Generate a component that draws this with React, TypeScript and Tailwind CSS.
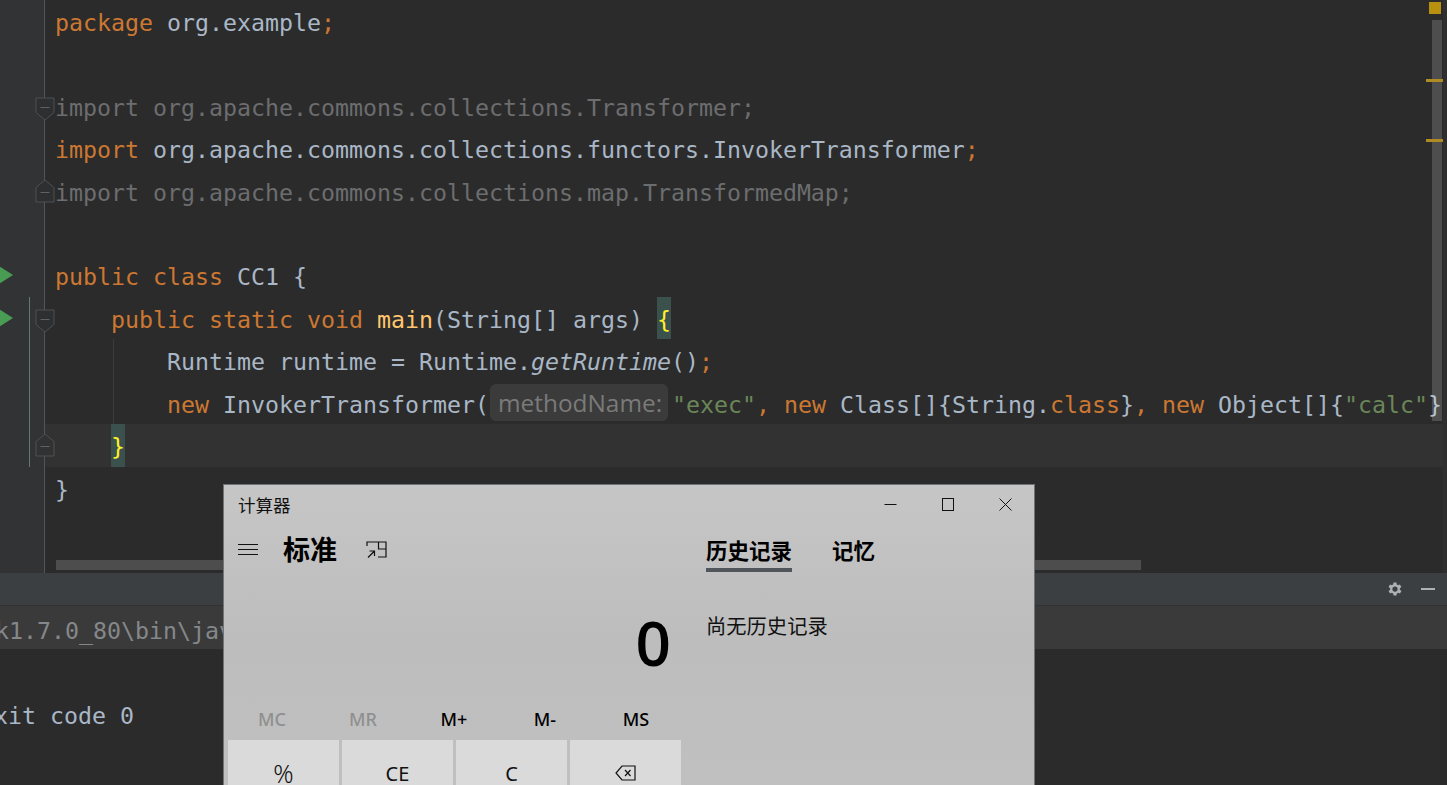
import React from "react";

type Seg = [string, string?];
const K = "text-[#cc7832]";
const I = "text-[#a9b7c6]";
const G = "text-[#6c6d6f]";
const S = "text-[#6a8759]";
const Y = "text-[#ffef28] bg-[#3b514d]";

function Run() {
  return (
    <svg className="absolute left-0 top-[10px]" width="14" height="22" viewBox="0 0 14 22">
      <path d="M-1 2 L13 11 L-1 20 Z" fill="#499c54" />
    </svg>
  );
}

function Fold({ up, filled, top }: { up?: boolean; filled?: boolean; top: string }) {
  return (
    <svg className={`absolute left-[35px] ${top}`} width="20" height="24" viewBox="0 0 20 24" fill="none">
      <path
        d={up ? "M1 8.5 L10 1 L19 8.5 V23 H1 Z" : "M1 1 H19 V15.5 L10 23 L1 15.5 Z"}
        fill={filled ? "#323232" : "#2e2f30"}
        stroke="#4e5052"
      />
      <path d={up ? "M5.5 13.5 H14.5" : "M5.5 10.5 H14.5"} stroke="#5f6163" />
    </svg>
  );
}

function Line({ segs }: { segs: Seg[] }) {
  return (
    <div className="h-[42.4px] pl-[10px] whitespace-pre">
      {segs.map((s, i) => (
        <span key={i} className={s[1] ?? I}>
          {s[0]}
        </span>
      ))}
    </div>
  );
}

function CalcKey({ children }: { children: React.ReactNode }) {
  return (
    <div className="h-[60px] flex-1 bg-[#dadada] flex items-start justify-center pt-[20px] text-[20px] leading-[28px] text-[#111]">
      {children}
    </div>
  );
}

const gutterRows = [0, 1, 2, 3, 4, 5, 6, 7, 8, 9, 10, 11];

export default function App() {
  return (
    <div className="w-[1447px] h-[785px] overflow-hidden relative bg-[#2b2b2b] flex flex-col font-['DejaVu_Sans_Mono',monospace] text-[23.25px] leading-[46px]">
      {/* Editor */}
      <div className="h-[573px] flex relative shrink-0">
        <div className="w-[45px] shrink-0 bg-[#313335] border-r border-[#555555] relative z-10">
          {gutterRows.map((n) => (
            <div key={n} className="h-[42.4px] relative">
              {n === 2 && <Fold top="top-[12px]" />}
              {n === 4 && <Fold up top="top-[9px]" />}
              {n === 6 && <Run />}
              {n === 7 && (
                <>
                  <Run />
                  <Fold top="top-[12px]" />
                </>
              )}
              {n === 10 && <Fold up filled top="top-[9px]" />}
            </div>
          ))}
          <div className="absolute left-[29px] top-[297px] w-px h-[170px] bg-[#5e7a72]" />
        </div>
        <div className="flex-1 min-w-0 relative overflow-hidden">
          <Line segs={[["package ", K], ["org.example"], [";", K]]} />
          <Line segs={[[" "]]} />
          <Line segs={[["import org.apache.commons.collections.Transformer;", G]]} />
          <Line segs={[["import ", K], ["org.apache.commons.collections.functors.InvokerTransformer"], [";", K]]} />
          <Line segs={[["import org.apache.commons.collections.map.TransformedMap;", G]]} />
          <Line segs={[[" "]]} />
          <Line segs={[["public class ", K], ["CC1 {"]]} />
          <div className="h-[42.4px] pl-[10px] whitespace-pre">
            <span className="inline-block w-[56px]" />
            <span className={K}>public static void </span>
            <span className="text-[#ffc66d]">main</span>
            <span className={I}>(String[] args) </span>
            <span className={`${Y} inline-block h-[42.4px]`}>{"{"}</span>
          </div>
          <div className="h-[42.4px] pl-[10px] whitespace-pre">
            <span className="inline-block w-[112px]" />
            <span className={I}>Runtime runtime = Runtime.</span>
            <span className={`${I} italic`}>getRuntime</span>
            <span className={I}>()</span>
            <span className={K}>;</span>
          </div>
          <div className="h-[42.4px] pl-[10px] whitespace-pre flex items-start">
            <span className="inline-block w-[112px]" />
            <span className={K}>new </span>
            <span className={I}>InvokerTransformer(</span>
            <span className="ml-px mr-[4px] mt-[2.4px] h-[37px] w-[178px] rounded-[6px] bg-[#3b3b3b] text-[#7a7a7a] font-['Open_Sans',sans-serif] text-[24.4px] leading-[38px] pl-[8px]">
              methodName:
            </span>
            <span className={S}>"exec"</span>
            <span className={K}>, new </span>
            <span className={I}>{"Class[]{String."}</span>
            <span className={K}>class</span>
            <span className={I}>{"}"}</span>
            <span className={K}>, new </span>
            <span className={I}>{"Object[]{"}</span>
            <span className={S}>"calc"</span>
            <span className={I}>{"}"}</span>
          </div>
          <div className="h-[43px] pl-[10px] whitespace-pre bg-[#323232]">
            <span className="inline-block w-[56px]" />
            <span className={`${Y} inline-block h-[43px]`}>{"}"}</span>
          </div>
          <Line segs={[["}"]]} />
          <div className="absolute left-[68px] top-[339px] w-px h-[85px] bg-[#3c3c3c]" />
          {/* horizontal scrollbar */}
          <div className="absolute left-[11px] top-[560px] w-[1085px] h-[10px] bg-[#4d4d4d]" />
        </div>
        <div className="w-[4px] shrink-0 bg-[#2f2f2f]" />
        {/* marker strip over the editor */}
        <div className="absolute left-[1429px] top-[2px] w-[12px] h-[12px] bg-[#b8900f]" />
        <div className="absolute left-[1432px] top-[20px] w-[10px] h-[401px] bg-[#ffffff]/[0.17]" />
        <div className="absolute left-[1426px] top-[79px] w-[17px] h-[3px] bg-[#b08a22]" />
        <div className="absolute left-[1426px] top-[139px] w-[17px] h-[3px] bg-[#b08a22]" />
      </div>

      {/* Tool window header */}
      <div className="h-[33px] shrink-0 bg-[#3c3f41] border-b border-[#323232] flex items-center justify-end pr-[12px] gap-[17px]">
        <svg width="18" height="18" viewBox="1 0 24 24" fill="#afb1b3">
          <path d="M19.4 13a7.6 7.6 0 0 0 0-2l2.1-1.6-2-3.4-2.5 1a7.7 7.7 0 0 0-1.7-1L15 3.4h-4L10.6 6a7.7 7.7 0 0 0-1.7 1l-2.5-1-2 3.4L6.6 11a7.6 7.6 0 0 0 0 2l-2.2 1.6 2 3.4 2.5-1a7.7 7.7 0 0 0 1.7 1l.4 2.6h4l.4-2.6a7.7 7.7 0 0 0 1.7-1l2.5 1 2-3.4ZM13 15.5a3.5 3.5 0 1 1 0-7 3.5 3.5 0 0 1 0 7Z" />
        </svg>
        <div className="w-[14px] h-[2px] bg-[#afb1b3]" />
      </div>

      {/* Console */}
      <div className="flex-1 min-h-0 overflow-hidden">
        <div className="h-[43px] bg-[#3a3a3a] whitespace-pre text-[#85888a] -indent-[5px] leading-[50px]">k1.7.0_80\bin\java.exe</div>
        <div className="h-[42.4px]" />
        <div className="h-[42.4px] whitespace-pre text-[#a9b7c6] -indent-[6px] leading-[50px]">xit code 0</div>
      </div>

      {/* Calculator window on top */}
      <div className="absolute left-[223px] top-[484px] w-[812px] h-[310px] border border-[#6e7478] bg-linear-to-b from-[#c6c6c6] via-[#bdbdbd] to-[#c0c0c0] text-black font-['Noto_Sans','Noto_Sans_CJK_SC',sans-serif] flex flex-col">
        <div className="h-[40px] shrink-0 flex items-center justify-between pl-[14px] pr-[22px]">
          <span className="text-[17.5px] leading-[38px] font-['Noto_Sans_CJK_SC',sans-serif] text-[#111]">计算器</span>
          <div className="flex items-center gap-[45px] mb-[1px]">
            <svg width="13" height="13" viewBox="0 0 13 13" fill="none" stroke="#111"><path d="M0.5 6.5H12.5" /></svg>
            <svg width="12" height="13" viewBox="0 0 12 13" fill="none" stroke="#111"><rect x="0.5" y="0.5" width="11" height="12" /></svg>
            <svg width="13" height="13" viewBox="0 0 13 13" fill="none" stroke="#111"><path d="M0.5 0.5L12.5 12.5M12.5 0.5L0.5 12.5" /></svg>
          </div>
        </div>
        <div className="flex flex-1 min-h-0">
          <div className="w-[458px] shrink-0 flex flex-col">
            <div className="h-[49px] flex items-center pl-[14px] shrink-0">
              <svg width="20" height="13" viewBox="0 0 20 13" fill="none" stroke="#111"><path d="M0 1.5H20M0 6.5H20M0 11.5H20" /></svg>
              <span className="ml-[25px] text-[27px] leading-[47px] mb-[2px] font-bold font-['Noto_Sans_CJK_SC',sans-serif]">标准</span>
              <svg className="ml-[29px]" width="21" height="18" viewBox="0 0 21 18" fill="none" stroke="#111" strokeWidth="1.2">
                <path d="M1 5V1H20V16H12M12.5 1V8H20M2 16.5L8 10.5M3.5 10H8.5V15" />
              </svg>
            </div>
            <div className="h-[124px] shrink-0 flex justify-end items-start pr-[11px]">
              <span className="text-[62px] leading-[85px] mt-[26px] font-semibold font-['Open_Sans',sans-serif]">0</span>
            </div>
            <div className="h-[42px] shrink-0 grid grid-cols-5 w-[455px] ml-[2.5px] text-[18px] leading-[24px] font-medium pt-[9px]">
              <span className="text-center text-[#8f8f8f]">MC</span>
              <span className="text-center text-[#8f8f8f]">MR</span>
              <span className="text-center">M+</span>
              <span className="text-center">M-</span>
              <span className="text-center">MS</span>
            </div>
            <div className="flex gap-[3px] pl-[4px] pr-[1px]">
              <CalcKey><span className="text-[25px] leading-[26px] font-light">%</span></CalcKey>
              <CalcKey>CE</CalcKey>
              <CalcKey>C</CalcKey>
              <CalcKey>
                <svg className="mt-[5px]" width="21" height="16" viewBox="0 0 21 16" fill="none" stroke="#111" strokeWidth="1.2">
                  <path d="M7 1H20V15H7L1 8Z" />
                  <path d="M10 5L15.5 11M15.5 5L10 11" />
                </svg>
              </CalcKey>
            </div>
          </div>
          <div className="flex-1 min-w-0 pl-[24px] font-['Noto_Sans_CJK_SC',sans-serif]">
            <div className="flex gap-[40px] h-[47px]">
              <div className="relative w-[86px] text-[21.5px] font-bold leading-[49px] whitespace-nowrap">
                历史记录
                <div className="absolute left-0 right-0 top-[43px] h-[4px] bg-[#50565b]" />
              </div>
              <div className="text-[21.5px] font-bold leading-[49px]">记忆</div>
            </div>
            <div className="text-[20.3px] leading-[30px] mt-[38px] text-[#111] whitespace-nowrap">尚无历史记录</div>
          </div>
        </div>
      </div>
    </div>
  );
}
